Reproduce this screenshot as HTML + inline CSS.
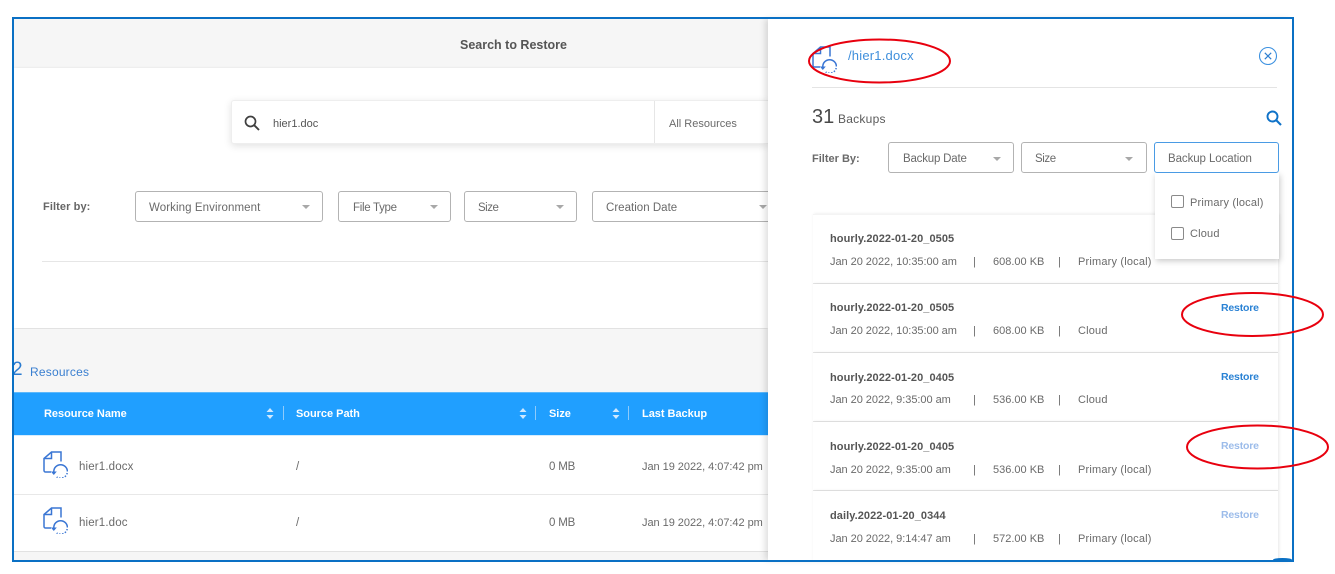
<!DOCTYPE html>
<html>
<head>
<meta charset="utf-8">
<style>
html,body{margin:0;padding:0;background:#fff}
#r{position:relative;width:1335px;height:574px;overflow:hidden;background:#fff;font-family:"Liberation Sans",sans-serif;font-size:11.5px;color:#6a6a6a}
#r *{box-sizing:border-box}
.a{position:absolute}
.t{position:absolute;white-space:nowrap;line-height:16px;height:16px;letter-spacing:.1px;margin-top:1px}
.sel{position:absolute;border:1px solid #b3b3b3;border-radius:3px;background:#fff}
.car{position:absolute;width:0;height:0;border-left:4px solid transparent;border-right:4px solid transparent;border-top:4px solid #a8a8a8}
.b{font-weight:bold;color:#555;font-size:11px;letter-spacing:.07px}
.h{font-weight:bold;color:#fff;font-size:11px;letter-spacing:-.03px;margin-top:0}
.d{font-size:11px;letter-spacing:-.04px}
.card{position:absolute;left:813px;width:465px;background:#fff;border-bottom:1.5px solid #e6e6e6;box-shadow:1px 0 3px rgba(0,0,0,.1)}
.rs{color:#2a82d4;font-weight:bold;font-size:10.5px;letter-spacing:-.18px}
.rl{color:#9cbcea;font-weight:bold;font-size:10.5px;letter-spacing:-.18px}
.sep{position:absolute;width:1px;height:14px;background:#8fcbfb;top:406px}
.cb{position:absolute;width:13px;height:13px;border:1px solid #8a8a8a;border-radius:2px;background:#fff}
</style>
</head>
<body>
<div id="r">
  <svg width="0" height="0" style="position:absolute">
    <defs>
      <symbol id="fi" viewBox="0 0 25 27">
        <path d="M8 21H2.500a1.500 1.500 0 0 1-1.500-1.500V7.500L8.500 1H18V10.500" fill="none" stroke="#3a76d4" stroke-width="1.500"/>
        <path d="M8.500 1V7.500H1" fill="none" stroke="#3a76d4" stroke-width="1.500"/>
        <path d="M10.800 20.500a6.800 6.800 0 1 1 13.600 0" fill="none" stroke="#3a76d4" stroke-width="1.500"/>
        <path d="M24.200 22a6.800 6.800 0 0 1-10.500 4" fill="none" stroke="#3a76d4" stroke-width="1.500" stroke-dasharray="1.500 1.500"/>
        <path d="M7.800 20.500h6l-3 3.500z" fill="#3a76d4"/>
      </symbol>
    </defs>
  </svg>

  <!-- main background -->
  <div class="a" style="left:14px;top:19px;width:754px;height:49px;background:#f6f6f6"></div>
  <div class="a" style="left:14px;top:68px;width:754px;height:260px;background:#fff;box-shadow:0 1px 3px rgba(0,0,0,.18)"></div>
  <div class="a" style="left:14px;top:329px;width:754px;height:231px;background:#f6f6f6"></div>
  <div class="t" style="left:460px;top:37px;font-size:12.500px;font-weight:bold;color:#555;letter-spacing:0;margin-top:0">Search to Restore</div>

  <!-- search -->
  <div class="a" style="left:231px;top:100px;width:537px;height:44px;background:#fff;border:1px solid #eee;border-right:0;border-radius:3px 0 0 3px;box-shadow:0 2px 8px rgba(0,0,0,.12)"></div>
  <div class="a" style="left:654px;top:101px;width:1px;height:42px;background:#e6e6e6"></div>
  <svg class="a" style="left:244px;top:115px" width="16" height="16" viewBox="0 0 16 16"><circle cx="6.500" cy="6.500" r="5" fill="none" stroke="#3f3f3f" stroke-width="1.700"/><path d="M10.300 10.300L15 15" stroke="#3f3f3f" stroke-width="1.900"/></svg>
  <div class="t" style="left:273px;top:115px;color:#555;font-size:11px;letter-spacing:0">hier1.doc</div>
  <div class="t" style="left:669px;top:115px;font-size:11px;letter-spacing:0">All Resources</div>

  <!-- filters -->
  <div class="t b" style="left:43px;top:198px;color:#666;letter-spacing:.1px">Filter by:</div>
  <div class="sel" style="left:135px;top:191px;width:188px;height:31px"></div>
  <div class="t" style="left:149px;top:199px;letter-spacing:.09px">Working Environment</div>
  <div class="car" style="left:302px;top:205px"></div>
  <div class="sel" style="left:338px;top:191px;width:113px;height:31px"></div>
  <div class="t" style="left:353px;top:199px;letter-spacing:-.3px">File Type</div>
  <div class="car" style="left:430px;top:205px"></div>
  <div class="sel" style="left:464px;top:191px;width:113px;height:31px"></div>
  <div class="t" style="left:478px;top:199px;letter-spacing:-.5px">Size</div>
  <div class="car" style="left:556px;top:205px"></div>
  <div class="sel" style="left:592px;top:191px;width:190px;height:31px"></div>
  <div class="t" style="left:606px;top:199px;letter-spacing:.02px">Creation Date</div>
  <div class="car" style="left:759px;top:205px"></div>
  <div class="a" style="left:42px;top:261px;width:726px;height:1px;background:#e6e6e6"></div>

  <!-- resources -->
  <div class="t" style="left:12px;top:358px;height:22px;line-height:22px;font-size:19px;color:#2a7bd0;letter-spacing:0">2</div>
  <div class="t" style="left:30px;top:363px;font-size:12px;color:#3a7fd0;font-weight:normal;letter-spacing:.2px">Resources</div>

  <!-- table -->
  <div class="a" style="left:14px;top:392px;width:754px;height:43px;background:#209fff;border-top:1px solid #5cb8fb"></div>
  <div class="t h" style="left:44px;top:406px">Resource Name</div>
  <div class="t h" style="left:296px;top:406px">Source Path</div>
  <div class="t h" style="left:549px;top:406px">Size</div>
  <div class="t h" style="left:642px;top:406px">Last Backup</div>
  <div class="sep" style="left:283px"></div>
  <div class="sep" style="left:535px"></div>
  <div class="sep" style="left:628px"></div>
  <svg class="a" style="left:266px;top:408px" width="8" height="11" viewBox="0 0 8 11"><path d="M4 0l3.500 4h-7zM4 11l3.500-4h-7z" fill="#cfe9ff"/></svg>
  <svg class="a" style="left:519px;top:408px" width="8" height="11" viewBox="0 0 8 11"><path d="M4 0l3.500 4h-7zM4 11l3.500-4h-7z" fill="#cfe9ff"/></svg>
  <svg class="a" style="left:612px;top:408px" width="8" height="11" viewBox="0 0 8 11"><path d="M4 0l3.500 4h-7zM4 11l3.500-4h-7z" fill="#cfe9ff"/></svg>

  <div class="a" style="left:14px;top:435px;width:754px;height:59px;background:#fff;border-top:1px solid #d6ecfd"></div>
  <div class="a" style="left:14px;top:494px;width:754px;height:1.500px;background:#e8e8e8"></div>
  <div class="a" style="left:14px;top:495px;width:754px;height:56px;background:#fff"></div>
  <div class="a" style="left:14px;top:551px;width:754px;height:1px;background:#e2e2e2"></div>

  <svg class="a" style="left:43px;top:451px" width="25" height="27"><use href="#fi"/></svg>
  <svg class="a" style="left:43px;top:507px" width="25" height="27"><use href="#fi"/></svg>
  <div class="t" style="left:79px;top:458px;letter-spacing:.15px">hier1.docx</div>
  <div class="t" style="left:79px;top:514px;letter-spacing:.15px">hier1.doc</div>
  <div class="t" style="left:296px;top:458px">/</div>
  <div class="t" style="left:296px;top:514px">/</div>
  <div class="t" style="left:549px;top:458px;letter-spacing:-.2px">0 MB</div>
  <div class="t" style="left:549px;top:514px;letter-spacing:-.2px">0 MB</div>
  <div class="t d" style="left:642px;top:458px">Jan 19 2022, 4:07:42 pm</div>
  <div class="t d" style="left:642px;top:514px">Jan 19 2022, 4:07:42 pm</div>

  <!-- side panel -->
  <div class="a" style="left:768px;top:19px;width:524px;height:541px;background:#fff;box-shadow:-3px 0 6px rgba(0,0,0,.13)"></div>
  <svg class="a" style="left:812px;top:46px" width="25" height="27"><use href="#fi"/></svg>
  <div class="t" style="left:848px;top:47px;font-size:13px;color:#3f8fdc;letter-spacing:.2px">/hier1.docx</div>
  <svg class="a" style="left:1258px;top:46px" width="20" height="20" viewBox="0 0 20 20"><circle cx="10" cy="10" r="8.500" fill="none" stroke="#3c91e0" stroke-width="1.100"/><path d="M6.800 6.800l6.400 6.400M13.200 6.800l-6.400 6.400" stroke="#2f7fd0" stroke-width="1.200"/></svg>
  <div class="a" style="left:812px;top:87px;width:465px;height:1px;background:#e4e4e4"></div>

  <div class="t" style="left:812px;top:105px;height:24px;line-height:24px;font-size:20px;color:#4a4a4a;letter-spacing:0;margin-top:0">31</div>
  <div class="t" style="left:838px;top:110px;font-size:12px;color:#5a5a5a;font-weight:normal;letter-spacing:.25px">Backups</div>
  <svg class="a" style="left:1266px;top:110px" width="16" height="16" viewBox="0 0 16 16"><circle cx="6.500" cy="6.500" r="5" fill="none" stroke="#0f72c8" stroke-width="1.900"/><path d="M10.300 10.300L15 15" stroke="#0f72c8" stroke-width="2.100"/></svg>

  <div class="t b" style="left:812px;top:150px;color:#6a6a6a;letter-spacing:0">Filter By:</div>
  <div class="sel" style="left:888px;top:142px;width:126px;height:31px"></div>
  <div class="t" style="left:903px;top:150px;letter-spacing:-.2px">Backup Date</div>
  <div class="car" style="left:993px;top:157px"></div>
  <div class="sel" style="left:1021px;top:142px;width:126px;height:31px"></div>
  <div class="t" style="left:1035px;top:150px;letter-spacing:-.4px">Size</div>
  <div class="car" style="left:1125px;top:157px"></div>

  <!-- cards -->
  <div class="card" style="top:214px;height:70px;border-top:1px solid #f4f4f4"></div>
  <div class="card" style="top:284px;height:69px"></div>
  <div class="card" style="top:353px;height:69px"></div>
  <div class="card" style="top:422px;height:69px"></div>
  <div class="card" style="top:491px;height:69px;border-bottom:0"></div>

  <div class="t b" style="left:830px;top:230px">hourly.2022-01-20_0505</div>
  <div class="t d" style="left:830px;top:253px">Jan 20 2022, 10:35:00 am</div>
  <div class="t d" style="left:973px;top:253px">|</div>
  <div class="t d" style="left:993px;top:253px;letter-spacing:0">608.00 KB</div>
  <div class="t d" style="left:1058px;top:253px">|</div>
  <div class="t d" style="left:1078px;top:253px;letter-spacing:.18px">Primary (local)</div>

  <div class="t b" style="left:830px;top:299px">hourly.2022-01-20_0505</div>
  <div class="t d" style="left:830px;top:322px">Jan 20 2022, 10:35:00 am</div>
  <div class="t d" style="left:973px;top:322px">|</div>
  <div class="t d" style="left:993px;top:322px;letter-spacing:0">608.00 KB</div>
  <div class="t d" style="left:1058px;top:322px">|</div>
  <div class="t d" style="left:1078px;top:322px;letter-spacing:.18px">Cloud</div>
  <div class="t rs" style="left:1221px;top:299px">Restore</div>

  <div class="t b" style="left:830px;top:369px">hourly.2022-01-20_0405</div>
  <div class="t d" style="left:830px;top:391px">Jan 20 2022, 9:35:00 am</div>
  <div class="t d" style="left:973px;top:391px">|</div>
  <div class="t d" style="left:993px;top:391px;letter-spacing:0">536.00 KB</div>
  <div class="t d" style="left:1058px;top:391px">|</div>
  <div class="t d" style="left:1078px;top:391px;letter-spacing:.18px">Cloud</div>
  <div class="t rs" style="left:1221px;top:368px">Restore</div>

  <div class="t b" style="left:830px;top:438px">hourly.2022-01-20_0405</div>
  <div class="t d" style="left:830px;top:461px">Jan 20 2022, 9:35:00 am</div>
  <div class="t d" style="left:973px;top:461px">|</div>
  <div class="t d" style="left:993px;top:461px;letter-spacing:0">536.00 KB</div>
  <div class="t d" style="left:1058px;top:461px">|</div>
  <div class="t d" style="left:1078px;top:461px;letter-spacing:.18px">Primary (local)</div>
  <div class="t rl" style="left:1221px;top:437px">Restore</div>

  <div class="t b" style="left:830px;top:507px">daily.2022-01-20_0344</div>
  <div class="t d" style="left:830px;top:530px">Jan 20 2022, 9:14:47 am</div>
  <div class="t d" style="left:973px;top:530px">|</div>
  <div class="t d" style="left:993px;top:530px;letter-spacing:0">572.00 KB</div>
  <div class="t d" style="left:1058px;top:530px">|</div>
  <div class="t d" style="left:1078px;top:530px;letter-spacing:.18px">Primary (local)</div>
  <div class="t rl" style="left:1221px;top:506px">Restore</div>

  <!-- dropdown -->
  <div class="a" style="left:1155px;top:173px;width:124px;height:86px;background:#fff;box-shadow:1px 2px 6px rgba(0,0,0,.22)"></div>
  <div class="a" style="left:1154px;top:142px;width:125px;height:31px;background:#fff;border:1px solid #4a9be4;border-radius:3px"></div>
  <div class="t" style="left:1168px;top:150px;letter-spacing:-.08px">Backup Location</div>
  <div class="cb" style="left:1171px;top:195px"></div>
  <div class="t d" style="left:1190px;top:194px;letter-spacing:.18px">Primary (local)</div>
  <div class="cb" style="left:1171px;top:227px"></div>
  <div class="t d" style="left:1190px;top:225px;letter-spacing:.18px">Cloud</div>

  <!-- frame -->
  <div class="a" style="left:12px;top:17px;width:1282px;height:545px;border:2px solid #0a70c4;pointer-events:none"></div>
  <div class="a" style="left:1273px;top:558px;width:19px;height:2px;border-radius:10px 10px 0 0 / 2px 2px 0 0;background:#0a70c4"></div>

  <!-- red ellipses -->
  <svg class="a" style="left:0;top:0" width="1335" height="574">
    <ellipse cx="879.500" cy="61" rx="70.500" ry="21.500" fill="none" stroke="#e8000e" stroke-width="2"/>
    <ellipse cx="1252.500" cy="314.500" rx="70.500" ry="21.500" fill="none" stroke="#e8000e" stroke-width="2"/>
    <ellipse cx="1257.500" cy="447" rx="70.500" ry="21.500" fill="none" stroke="#e8000e" stroke-width="2"/>
  </svg>
</div>
</body>
</html>
